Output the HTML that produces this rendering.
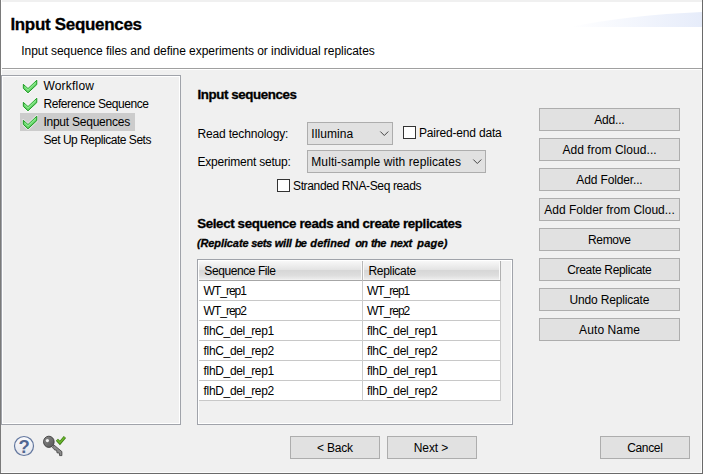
<!DOCTYPE html>
<html lang="en"><head><meta charset="utf-8"><title>Input Sequences</title>
<style>
html,body{margin:0;padding:0;}
body{width:703px;height:474px;overflow:hidden;background:#f0f0f0;font-family:"Liberation Sans",sans-serif;color:#000;position:relative;}
h1,h2,p,label,em,span.t{margin:0;padding:0;display:block;}
.t{position:absolute;white-space:nowrap;line-height:20px;height:20px;}
.abs{position:absolute;}
.btn{position:absolute;box-sizing:border-box;width:141px;height:23px;background:#e1e1e1;border:1px solid #adadad;}
.btn.nav{width:90px;}
.combo{position:absolute;box-sizing:border-box;height:23px;background:#e1e1e1;border:1px solid #adadad;}
.cb{position:absolute;box-sizing:border-box;width:13px;height:13px;background:#fff;border:1px solid #333;}
.etch{position:absolute;box-sizing:border-box;border:1px solid #a0a3aa;box-shadow:inset 0 0 0 1px #fff;}
.row{position:absolute;left:199px;width:302px;height:20px;box-sizing:border-box;border-bottom:1px solid #c8c8c8;background:#fff;}
.thead{position:absolute;left:199px;top:261px;width:302px;height:20px;box-sizing:border-box;border-bottom:1px solid #a6a6a6;background:linear-gradient(#f8f8f8 0%,#ededed 25%,#e3e3e3 47%,#d7d7d7 50%,#dddddd 75%,#ebebeb 94%,#f6f6f6 100%);}
</style></head><body>
<header>
<div class="abs" style="left:0;top:2px;width:703px;height:66px;background:#fff"></div>
<svg class="abs" style="left:560px;top:2px" width="142" height="30" viewBox="0 0 142 30"><defs><linearGradient id="bg" x1="0" x2="1" y1="0" y2="0"><stop offset="0" stop-color="#ffffff"/><stop offset="1" stop-color="#e6ecfa"/></linearGradient></defs><path d="M10 25 Q 70 13 143 10 L143 25 Z" fill="url(#bg)"/></svg>
<h1 class="t" style="left:10.40px;top:15px;font-size:17px;font-weight:bold;font-style:normal;letter-spacing:-0.317px;-webkit-text-stroke:0.3px #000;">Input Sequences</h1>
<p class="t" style="left:21.30px;top:41px;font-size:12px;font-weight:normal;font-style:normal;letter-spacing:-0.051px;">Input sequence files and define experiments or individual replicates</p>
<div class="abs" style="left:0;top:68px;width:703px;height:1px;background:#a0a0a0"></div>
<div class="abs" style="left:1px;top:69px;width:701px;height:1px;background:#ffffff"></div>
</header>
<nav>
<div class="etch" style="left:1px;top:75px;width:180px;height:350px"></div>
<div class="abs" style="left:20px;top:113px;width:115px;height:18px;background:#cccccc"></div>
<svg class="abs" style="left:20px;top:77px" width="20" height="18" viewBox="20 77 20 18"><path d="M23.3 84.3 L28 88.6 L36.8 80.2 L36.8 84.6 L28 92.8 L23.3 88.4 Z" fill="none" stroke="#ffffff" stroke-opacity="0.55" stroke-width="2.4" stroke-linejoin="round"/><path d="M23.3 84.3 L28 88.6 L36.8 80.2 L36.8 84.6 L28 92.8 L23.3 88.4 Z" fill="#62d066" stroke="#1f9a24" stroke-width="1" stroke-linejoin="round"/><path d="M24.6 86.6 L28 89.9 L35.8 82.5" fill="none" stroke="#8cec8e" stroke-width="1.2"/></svg>
<span class="t" style="left:43.40px;top:76px;font-size:12px;font-weight:normal;font-style:normal;letter-spacing:0.211px;">Workflow</span>
<svg class="abs" style="left:20px;top:95px" width="20" height="18" viewBox="20 77 20 18"><path d="M23.3 84.3 L28 88.6 L36.8 80.2 L36.8 84.6 L28 92.8 L23.3 88.4 Z" fill="none" stroke="#ffffff" stroke-opacity="0.55" stroke-width="2.4" stroke-linejoin="round"/><path d="M23.3 84.3 L28 88.6 L36.8 80.2 L36.8 84.6 L28 92.8 L23.3 88.4 Z" fill="#62d066" stroke="#1f9a24" stroke-width="1" stroke-linejoin="round"/><path d="M24.6 86.6 L28 89.9 L35.8 82.5" fill="none" stroke="#8cec8e" stroke-width="1.2"/></svg>
<span class="t" style="left:43.40px;top:94px;font-size:12px;font-weight:normal;font-style:normal;letter-spacing:-0.421px;">Reference Sequence</span>
<svg class="abs" style="left:20px;top:113px" width="20" height="18" viewBox="20 77 20 18"><path d="M23.3 84.3 L28 88.6 L36.8 80.2 L36.8 84.6 L28 92.8 L23.3 88.4 Z" fill="none" stroke="#ffffff" stroke-opacity="0.55" stroke-width="2.4" stroke-linejoin="round"/><path d="M23.3 84.3 L28 88.6 L36.8 80.2 L36.8 84.6 L28 92.8 L23.3 88.4 Z" fill="#62d066" stroke="#1f9a24" stroke-width="1" stroke-linejoin="round"/><path d="M24.6 86.6 L28 89.9 L35.8 82.5" fill="none" stroke="#8cec8e" stroke-width="1.2"/></svg>
<span class="t" style="left:43.40px;top:112px;font-size:12px;font-weight:normal;font-style:normal;letter-spacing:-0.234px;">Input Sequences</span>
<span class="t" style="left:43.40px;top:130px;font-size:12px;font-weight:normal;font-style:normal;letter-spacing:-0.465px;">Set Up Replicate Sets</span>
</nav>
<main>
<h2 class="t" style="left:197.40px;top:85px;font-size:13.33px;font-weight:bold;font-style:normal;letter-spacing:-0.405px;-webkit-text-stroke:0.3px #000;">Input sequences</h2>
<label class="t" style="left:197.50px;top:124px;font-size:12px;font-weight:normal;font-style:normal;letter-spacing:-0.174px;">Read technology:</label>
<div class="combo" style="left:307px;top:122px;width:86px"><span class="t" style="left:3.30px;top:1px;font-size:12px;font-weight:normal;font-style:normal;letter-spacing:0.077px;">Illumina</span><svg class="abs" style="left:71px;top:6px" width="11" height="9" viewBox="0 0 11 9"><path d="M1.3 2.5 L5.3 6.5 L9.3 2.5" fill="none" stroke="#444" stroke-width="1"/></svg></div>
<div class="cb" style="left:403px;top:126px"></div><label class="t" style="left:418.90px;top:123px;font-size:12px;font-weight:normal;font-style:normal;letter-spacing:-0.179px;">Paired-end data</label>
<label class="t" style="left:197.50px;top:152px;font-size:12px;font-weight:normal;font-style:normal;letter-spacing:-0.214px;">Experiment setup:</label>
<div class="combo" style="left:307px;top:150px;width:179px"><span class="t" style="left:3.30px;top:1px;font-size:12px;font-weight:normal;font-style:normal;letter-spacing:0.082px;">Multi-sample with replicates</span><svg class="abs" style="left:164px;top:6px" width="11" height="9" viewBox="0 0 11 9"><path d="M1.3 2.5 L5.3 6.5 L9.3 2.5" fill="none" stroke="#444" stroke-width="1"/></svg></div>
<div class="cb" style="left:277px;top:179px"></div><label class="t" style="left:293.00px;top:176px;font-size:12px;font-weight:normal;font-style:normal;letter-spacing:-0.361px;">Stranded RNA-Seq reads</label>
<h2 class="t" style="left:197.20px;top:214px;font-size:13.33px;font-weight:bold;font-style:normal;letter-spacing:-0.365px;-webkit-text-stroke:0.3px #000;">Select sequence reads and create replicates</h2>
<p><em class="t" style="left:196.93px;top:233px;font-size:11px;font-weight:bold;font-style:italic;letter-spacing:-0.104px;-webkit-text-stroke:0.3px #000;">(Replicate</em> <em class="t" style="left:251.32px;top:233px;font-size:11px;font-weight:bold;font-style:italic;letter-spacing:-0.389px;-webkit-text-stroke:0.3px #000;">sets</em> <em class="t" style="left:274.72px;top:233px;font-size:11px;font-weight:bold;font-style:italic;letter-spacing:-0.189px;-webkit-text-stroke:0.3px #000;">will</em> <em class="t" style="left:294.91px;top:233px;font-size:11px;font-weight:bold;font-style:italic;letter-spacing:-0.972px;-webkit-text-stroke:0.3px #000;">be</em> <em class="t" style="left:310.37px;top:233px;font-size:11px;font-weight:bold;font-style:italic;letter-spacing:0.056px;-webkit-text-stroke:0.3px #000;">defined</em> <em class="t" style="left:355.31px;top:233px;font-size:11px;font-weight:bold;font-style:italic;letter-spacing:-0.777px;-webkit-text-stroke:0.3px #000;">on</em> <em class="t" style="left:370.93px;top:233px;font-size:11px;font-weight:bold;font-style:italic;letter-spacing:-0.475px;-webkit-text-stroke:0.3px #000;">the</em> <em class="t" style="left:390.42px;top:233px;font-size:11px;font-weight:bold;font-style:italic;letter-spacing:-0.254px;-webkit-text-stroke:0.3px #000;">next</em> <em class="t" style="left:417.19px;top:233px;font-size:11px;font-weight:bold;font-style:italic;letter-spacing:0.245px;-webkit-text-stroke:0.3px #000;">page)</em></p>
<div class="etch" style="left:197px;top:259px;width:316px;height:166px"></div>
<div class="thead"><span class="t" style="left:5.30px;top:0px;font-size:12px;font-weight:normal;font-style:normal;letter-spacing:-0.418px;">Sequence File</span><span class="t" style="left:169.40px;top:0px;font-size:12px;font-weight:normal;font-style:normal;letter-spacing:-0.279px;">Replicate</span></div>
<div class="row" style="top:281px"><span class="t" style="left:4.60px;top:0px;font-size:12px;font-weight:normal;font-style:normal;letter-spacing:-1.010px;">WT_rep1</span><span class="t" style="left:168.00px;top:0px;font-size:12px;font-weight:normal;font-style:normal;letter-spacing:-1.010px;">WT_rep1</span></div>
<div class="row" style="top:301px"><span class="t" style="left:4.60px;top:0px;font-size:12px;font-weight:normal;font-style:normal;letter-spacing:-1.010px;">WT_rep2</span><span class="t" style="left:168.00px;top:0px;font-size:12px;font-weight:normal;font-style:normal;letter-spacing:-1.010px;">WT_rep2</span></div>
<div class="row" style="top:321px"><span class="t" style="left:4.60px;top:0px;font-size:12px;font-weight:normal;font-style:normal;letter-spacing:-0.343px;">flhC_del_rep1</span><span class="t" style="left:168.00px;top:0px;font-size:12px;font-weight:normal;font-style:normal;letter-spacing:-0.343px;">flhC_del_rep1</span></div>
<div class="row" style="top:341px"><span class="t" style="left:4.60px;top:0px;font-size:12px;font-weight:normal;font-style:normal;letter-spacing:-0.343px;">flhC_del_rep2</span><span class="t" style="left:168.00px;top:0px;font-size:12px;font-weight:normal;font-style:normal;letter-spacing:-0.343px;">flhC_del_rep2</span></div>
<div class="row" style="top:361px"><span class="t" style="left:4.60px;top:0px;font-size:12px;font-weight:normal;font-style:normal;letter-spacing:-0.343px;">flhD_del_rep1</span><span class="t" style="left:168.00px;top:0px;font-size:12px;font-weight:normal;font-style:normal;letter-spacing:-0.343px;">flhD_del_rep1</span></div>
<div class="row" style="top:381px"><span class="t" style="left:4.60px;top:0px;font-size:12px;font-weight:normal;font-style:normal;letter-spacing:-0.343px;">flhD_del_rep2</span><span class="t" style="left:168.00px;top:0px;font-size:12px;font-weight:normal;font-style:normal;letter-spacing:-0.343px;">flhD_del_rep2</span></div>
<div class="abs" style="left:362px;top:281px;width:1px;height:120px;background:#cccccc"></div>
<div class="abs" style="left:500px;top:281px;width:1px;height:120px;background:#cccccc"></div>
<div class="abs" style="left:361px;top:262px;width:3px;height:18px;background:#fafafa"></div>
<div class="abs" style="left:362px;top:261px;width:1px;height:20px;background:#b8b8b8"></div>
<div class="abs" style="left:499px;top:262px;width:1px;height:18px;background:#fafafa"></div>
<div class="abs" style="left:500px;top:261px;width:1px;height:20px;background:#b0b0b0"></div>
</main>
<aside>
<div class="btn" role="button" style="left:539px;top:108px"><span class="t" style="left:54.30px;top:1px;font-size:12px;font-weight:normal;font-style:normal;letter-spacing:-0.192px;">Add...</span></div>
<div class="btn" role="button" style="left:539px;top:138px"><span class="t" style="left:22.40px;top:1px;font-size:12px;font-weight:normal;font-style:normal;letter-spacing:0.052px;">Add from Cloud...</span></div>
<div class="btn" role="button" style="left:539px;top:168px"><span class="t" style="left:36.30px;top:1px;font-size:12px;font-weight:normal;font-style:normal;letter-spacing:-0.137px;">Add Folder...</span></div>
<div class="btn" role="button" style="left:539px;top:198px"><span class="t" style="left:4.25px;top:1px;font-size:12px;font-weight:normal;font-style:normal;letter-spacing:-0.010px;">Add Folder from Cloud...</span></div>
<div class="btn" role="button" style="left:539px;top:228px"><span class="t" style="left:47.95px;top:1px;font-size:12px;font-weight:normal;font-style:normal;letter-spacing:-0.317px;">Remove</span></div>
<div class="btn" role="button" style="left:539px;top:258px"><span class="t" style="left:27.20px;top:1px;font-size:12px;font-weight:normal;font-style:normal;letter-spacing:-0.319px;">Create Replicate</span></div>
<div class="btn" role="button" style="left:539px;top:288px"><span class="t" style="left:29.60px;top:1px;font-size:12px;font-weight:normal;font-style:normal;letter-spacing:-0.174px;">Undo Replicate</span></div>
<div class="btn" role="button" style="left:539px;top:318px"><span class="t" style="left:39.10px;top:1px;font-size:12px;font-weight:normal;font-style:normal;letter-spacing:0.096px;">Auto Name</span></div>
</aside>
<footer>
<svg class="abs" style="left:10px;top:432px" width="62" height="28" viewBox="10 432 62 28">
<defs><linearGradient id="hg" x1="0" x2="0" y1="0" y2="1"><stop offset="0" stop-color="#fbfbfd"/><stop offset="1" stop-color="#e4e6ec"/></linearGradient>
<linearGradient id="kg" x1="0" x2="1" y1="0" y2="1"><stop offset="0" stop-color="#8c8c8c"/><stop offset="1" stop-color="#555555"/></linearGradient></defs>
<circle cx="24" cy="446" r="9.5" fill="url(#hg)" stroke="#64789f" stroke-width="1.2"/>
<text x="24.1" y="452.9" text-anchor="middle" font-family="Liberation Sans, sans-serif" font-weight="bold" font-size="18.5" fill="#526791">?</text>
<path d="M52.3 447.6 L54.0 445.0 L61.9 451.6 L61.9 455.6 L59.6 455.6 L59.3 453.0 L57.0 452.8 L56.6 450.2 L54.6 450.0 L53.8 448.6 Z" fill="#8c8c8c" stroke="#3e3e3e" stroke-width="0.8" stroke-linejoin="round"/>
<ellipse cx="48.85" cy="441.8" rx="5.3" ry="5.6" fill="url(#kg)" stroke="#3a3a3a" stroke-width="0.9"/>
<circle cx="47.4" cy="440.6" r="1.6" fill="#f2f2f2"/>
<path d="M56.9 439.7 L59.9 442.9 L64.9 437.0" fill="none" stroke="#3f7d16" stroke-width="3" stroke-linejoin="miter"/>
<path d="M57.2 440.0 L59.9 442.8 L64.6 437.3" fill="none" stroke="#6dbb2e" stroke-width="1.4"/>
</svg>
<div class="btn nav" role="button" style="left:290px;top:436px"><span class="t" style="left:26.05px;top:1px;font-size:12px;font-weight:normal;font-style:normal;letter-spacing:-0.226px;">&lt; Back</span></div>
<div class="btn nav" role="button" style="left:387px;top:436px"><span class="t" style="left:25.80px;top:1px;font-size:12px;font-weight:normal;font-style:normal;letter-spacing:-0.123px;">Next &gt;</span></div>
<div class="btn nav" role="button" style="left:600px;top:436px"><span class="t" style="left:26.15px;top:1px;font-size:12px;font-weight:normal;font-style:normal;letter-spacing:-0.332px;">Cancel</span></div>
</footer>
<div class="abs" style="left:0;top:0;width:1px;height:474px;background:#7a7a7a"></div>
<div class="abs" style="left:702px;top:0;width:1px;height:474px;background:#6a6a6a"></div>
<div class="abs" style="left:0;top:473px;width:703px;height:1px;background:#6a6a6a"></div>
<div class="abs" style="left:1px;top:472px;width:701px;height:1px;background:#fbfbfb"></div>
<div class="abs" style="left:701px;top:69px;width:1px;height:404px;background:#fbfbfb"></div>
<div class="abs" style="left:1px;top:0;width:1px;height:75px;background:#ffffff"></div>
</body></html>
